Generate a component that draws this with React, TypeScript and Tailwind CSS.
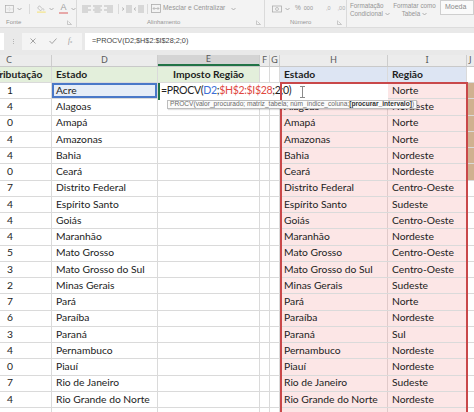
import React from "react";

const C_VALS = [1, 4, 0, 4, 4, 0, 7, 4, 4, 4, 5, 3, 2, 7, 6, 3, 4, 0, 7, 4, 3];
const STATES = [
  "Acre", "Alagoas", "Amapá", "Amazonas", "Bahia", "Ceará", "Distrito Federal",
  "Espírito Santo", "Goiás", "Maranhão", "Mato Grosso", "Mato Grosso do Sul",
  "Minas Gerais", "Pará", "Paraíba", "Paraná", "Pernambuco", "Piauí",
  "Rio de Janeiro", "Rio Grande do Norte", "",
];
const REGIONS = [
  "Norte", "Nordeste", "Norte", "Norte", "Nordeste", "Nordeste", "Centro-Oeste",
  "Sudeste", "Centro-Oeste", "Nordeste", "Centro-Oeste", "Centro-Oeste",
  "Sudeste", "Norte", "Nordeste", "Sul", "Nordeste", "Nordeste", "Sudeste",
  "Nordeste", "",
];

function Caret() {
  return (
    <svg width="5" height="4" viewBox="0 0 5 4" className="shrink-0">
      <path d="M0.5 1 L2.5 3 L4.5 1" fill="none" stroke="#a0a0a0" strokeWidth="0.8" />
    </svg>
  );
}

function Launcher() {
  return (
    <svg width="5" height="5" viewBox="0 0 5 5">
      <path d="M0.5 0.5 V4.5 H4.5 M1.5 1.5 L4.5 4.5" fill="none" stroke="#b5b5b5" strokeWidth="0.7" />
    </svg>
  );
}

function Ribbon() {
  return (
    <div className="flex h-[28px] bg-[#f3f3f3] border-b border-[#dcdcdc] text-[#959595] font-['Liberation_Sans',sans-serif]">
      {/* Fonte */}
      <div className="w-[77px] flex flex-col border-r border-[#dadada]">
        <div className="h-[17px] flex items-center pl-[5px] gap-[3px]">
          <svg width="11" height="10" viewBox="0 0 11 10">
            <rect x="0.5" y="0.5" width="10" height="9" fill="none" stroke="#a8a8a8" strokeWidth="0.8" />
            <path d="M5.5 0.5 V9.5 M0.5 5 H10.5" stroke="#c4c4c4" strokeWidth="0.7" strokeDasharray="1 1" />
          </svg>
          <Caret />
          <div className="w-[1px] h-[10px] bg-[#dadada] mx-[4px]" />
          <svg width="12" height="11" viewBox="0 0 12 11">
            <path d="M3 2 L7 6 L4.5 8.5 L0.8 4.8 Z" fill="none" stroke="#a8a8a8" strokeWidth="0.8" />
            <path d="M8 5.5 Q9 7 8.5 8" fill="none" stroke="#a8a8a8" strokeWidth="0.8" />
            <rect x="0" y="9.2" width="11" height="1.8" fill="#f4e79a" />
          </svg>
          <Caret />
          <div className="flex flex-col items-center ml-[2px]">
            <span className="text-[9px] leading-[9px] text-[#a0a0a0]">A</span>
            <div className="w-[9px] h-[1.6px] bg-[#e7a8a8]" />
          </div>
          <Caret />
        </div>
        <div className="flex-1 flex items-center justify-between pl-[6px] pr-[4px]">
          <span className="text-[6px] leading-none">Fonte</span>
          <Launcher />
        </div>
      </div>
      {/* Alinhamento */}
      <div className="w-[188px] flex flex-col border-r border-[#dadada]">
        <div className="h-[17px] flex items-center pl-[5px]">
          {[0, 1, 2].map((k) => (
            <svg key={k} width="9" height="8" viewBox="0 0 9 8" className="mr-[2px]">
              {k === 0 && <path d="M0 1 H9 M0 3 H6 M0 5 H9 M0 7 H6" stroke="#acacac" strokeWidth="0.8" />}
              {k === 1 && <path d="M0 1 H9 M1.5 3 H7.5 M0 5 H9 M1.5 7 H7.5" stroke="#acacac" strokeWidth="0.8" />}
              {k === 2 && <path d="M0 1 H9 M3 3 H9 M0 5 H9 M3 7 H9" stroke="#acacac" strokeWidth="0.8" />}
            </svg>
          ))}
          <div className="w-[1px] h-[10px] bg-[#dadada] mx-[3px]" />
          <svg width="10" height="8" viewBox="0 0 10 8" className="mr-[2px]">
            <path d="M4 1 H10 M4 3 H10 M4 5 H10 M4 7 H10 M0 2.5 L2 4 L0 5.5" fill="none" stroke="#acacac" strokeWidth="0.8" />
          </svg>
          <svg width="10" height="8" viewBox="0 0 10 8">
            <path d="M4 1 H10 M4 3 H10 M4 5 H10 M4 7 H10 M2 2.5 L0 4 L2 5.5" fill="none" stroke="#acacac" strokeWidth="0.8" />
          </svg>
          <div className="w-[1px] h-[10px] bg-[#dadada] mx-[3px]" />
          <svg width="10" height="9" viewBox="0 0 10 9" className="mr-[2px]">
            <rect x="0.5" y="0.5" width="9" height="8" fill="none" stroke="#acacac" strokeWidth="0.8" />
            <path d="M2 4.5 H8 M6.5 3 L8 4.5 L6.5 6 M3.5 3 L2 4.5 L3.5 6" fill="none" stroke="#acacac" strokeWidth="0.7" />
          </svg>
          <span className="text-[6.6px] leading-none whitespace-nowrap mr-[6px]">Mesclar e Centralizar</span>
          <Caret />
        </div>
        <div className="flex-1 flex items-center pr-[3px]">
          <span className="text-[6px] leading-none ml-[70px] flex-1">Alinhamento</span>
          <Launcher />
        </div>
      </div>
      {/* Número */}
      <div className="w-[82px] flex flex-col border-r border-[#dadada]">
        <div className="h-[17px] flex items-center pl-[7px] gap-[3px]">
          <svg width="10" height="8" viewBox="0 0 10 8">
            <rect x="0.5" y="1" width="9" height="6" fill="none" stroke="#acacac" strokeWidth="0.8" />
            <circle cx="5" cy="4" r="1.5" fill="none" stroke="#acacac" strokeWidth="0.7" />
          </svg>
          <Caret />
          <span className="text-[6.5px] leading-none ml-[2px]">%</span>
          <span className="text-[5.5px] leading-none">000</span>
          <span className="text-[5.5px] leading-none ml-[10px] text-[#acacac]">,0</span>
          <span className="text-[5.5px] leading-none ml-[4px] text-[#acacac]">,00</span>
        </div>
        <div className="flex-1 flex items-center pr-[4px]">
          <span className="text-[6px] leading-none ml-[25px] flex-1">Número</span>
          <Launcher />
        </div>
      </div>
      {/* Estilos */}
      <div className="flex-1 flex">
        <div className="flex flex-col pl-[3px] pt-[2px] text-[6.3px] leading-[8px] w-[42px]">
          <span className="whitespace-nowrap">Formatação</span>
          <span className="whitespace-nowrap flex items-center gap-[2px]">Condicional <Caret /></span>
        </div>
        <div className="flex flex-col items-center pt-[2px] text-[6.3px] leading-[8px] w-[51px]">
          <span className="whitespace-nowrap">Formatar como</span>
          <span className="whitespace-nowrap flex items-center gap-[2px]">Tabela <Caret /></span>
        </div>
        <div className="flex-1 h-[15px] border border-[#cfcfcf] bg-[#fafafa] flex items-center pl-[4px] text-[7px] text-[#8a8a8a]">
          Moeda
        </div>
      </div>
    </div>
  );
}

function FormulaBar() {
  return (
    <div className="flex items-center h-[27px] bg-[#e9e9e9] pb-[1px]">
      <div className="w-[4px] h-[17px] bg-white" />
      <div className="w-[18px] h-[17px] flex flex-col items-center justify-center gap-[1px]">
        <div className="w-[1px] h-[1px] bg-[#b5b5b5]" />
        <div className="w-[1px] h-[1px] bg-[#b5b5b5]" />
        <div className="w-[1px] h-[1px] bg-[#b5b5b5]" />
      </div>
      <div className="w-[60px] h-[17px] bg-[#f4f4f4] flex items-center text-[#9a9a9a]">
        <svg width="6" height="6" viewBox="0 0 6 6" className="ml-[8px]">
          <path d="M0.5 0.5 L5.5 5.5 M5.5 0.5 L0.5 5.5" stroke="#9a9a9a" strokeWidth="0.9" />
        </svg>
        <svg width="8" height="6" viewBox="0 0 8 6" className="ml-[13px]">
          <path d="M0.5 3 L3 5.5 L7.5 0.5" fill="none" stroke="#9a9a9a" strokeWidth="0.9" />
        </svg>
        <span className="ml-[11px] text-[7.5px] italic font-['Liberation_Serif',serif] text-[#9a9a9a]">
          f<span className="text-[5px]">x</span>
        </span>
      </div>
      <div className="ml-[3px] flex-1 h-[17px] bg-white flex items-center pl-[7px] text-[7.3px] text-[#444] font-['Liberation_Sans',sans-serif]">
        =PROCV(D2;$H$2:$I$28;2;0)
      </div>
    </div>
  );
}

const GRID = "border-[#dadada]";

function ColumnHeaders() {
  const head = "h-full flex items-center justify-center border-r border-[#cdcdcd] text-[9.5px] text-[#5a5a5a]";
  return (
    <div className="flex h-[12px] bg-[#ececec] border-b border-[#c9c9c9] font-['Noto_Sans','Liberation_Sans',sans-serif]">
      <div className={`${head} w-[52px] !justify-start pl-[6px]`}>C</div>
      <div className={`${head} w-[106px]`}>D</div>
      <div className={`${head} w-[102px] bg-[#d4d4d4] border-b-2 border-b-[#217346]`}>E</div>
      <div className={`${head} w-[10px]`}>F</div>
      <div className={`${head} w-[10px]`}>G</div>
      <div className={`${head} w-[108px]`}>H</div>
      <div className={`${head} w-[79px]`}>I</div>
      <div className="h-full flex items-center pl-[2px] text-[9.5px] text-[#5a5a5a]">J</div>
    </div>
  );
}

function HeaderRow() {
  const cell = `h-full flex items-center border-r ${GRID} font-bold text-[#1e1e1e] whitespace-nowrap overflow-hidden`;
  return (
    <div className={`flex h-[16px] border-b ${GRID}`}>
      <div className={`${cell} w-[52px] bg-[#e3efdb]`}>
        <span className="-ml-[6px]">Tributação</span>
      </div>
      <div className={`${cell} w-[106px] bg-[#e3efdb] pl-[4px]`}>Estado</div>
      <div className={`${cell} w-[102px] bg-[#e3efdb] justify-center`}>Imposto Região</div>
      <div className={`${cell} w-[10px]`} />
      <div className={`${cell} w-[10px]`} />
      <div className={`${cell} w-[108px] bg-[#dde5f3] pl-[4px]`}>Estado</div>
      <div className={`${cell} w-[79px] bg-[#dde5f3] pl-[4px]`}>Região</div>
      <div className="flex-1" />
    </div>
  );
}

function DataRow({ i }: { i: number }) {
  const cell = `h-full flex items-center border-r ${GRID} whitespace-nowrap overflow-hidden`;
  const pink = "h-full flex items-center border-r border-[#e0caca] whitespace-nowrap overflow-hidden bg-[#fce6e6] pl-[4px]";
  const tan = i < 6;
  const last = i === STATES.length - 1;
  return (
    <div className={`flex h-[16.25px] border-b ${GRID} text-[#222]`}>
      <div className={`${cell} w-[52px] pl-[7px]`}>{last ? "" : C_VALS[i]}</div>
      <div
        className={`${cell} w-[106px] pl-[4px] ${i === 0 ? "bg-[#e6edf7] shadow-[inset_0_0_0_2px_#4a78c8]" : ""}`}
      >
        {STATES[i]}
      </div>
      <div className={`${cell} w-[102px]`} />
      <div className={`${cell} w-[10px]`} />
      <div className={`${cell} w-[10px]`} />
      <div className={`${pink} w-[108px]`}>{i === 0 ? "" : STATES[i]}</div>
      <div className={`${pink} w-[79px]`}>{REGIONS[i]}</div>
      <div className={`h-full flex-1 ${tan ? "bg-[#d0b190]" : ""}`} />
    </div>
  );
}

export default function App() {
  return (
    <div className="relative w-[474px] h-[412px] overflow-hidden bg-white">
      <Ribbon />
      <FormulaBar />
      <ColumnHeaders />
      <div className="font-['Lato','Liberation_Sans',sans-serif] text-[10.3px]">
        <HeaderRow />
        {STATES.map((_, i) => (
          <DataRow key={i} i={i} />
        ))}
      </div>

      {/* in-cell editor */}
      <div className="absolute z-10 left-[158px] top-[83px] w-[230px] h-[16.5px] bg-white border-l-2 border-[#217346] flex items-center pl-[1px] font-['Lato','Liberation_Sans',sans-serif] text-[10.6px] tracking-[-0.35px] text-[#222] whitespace-nowrap">
        <span>=PROCV(</span>
        <span className="text-[#3d6fd6]">D2</span>
        <span>;</span>
        <span className="text-[#e0483f]">$H$2:$I$28</span>
        <span>;2;0)</span>
      </div>

      {/* referenced range */}
      <div className="absolute z-20 left-[280px] top-[82px] w-[188px] h-[340px] border-2 border-[#c9484a] pointer-events-none" />

      {/* I-beam cursor */}
      <svg className="absolute z-20 left-[299px] top-[86px]" width="7" height="12" viewBox="0 0 7 12">
        <path d="M1 0.5 H6 M3.5 0.5 V11.5 M1 11.5 H6" stroke="#8a8a8a" strokeWidth="1" fill="none" />
      </svg>

      {/* function tooltip */}
      <div className="absolute z-30 left-[167px] top-[100px] h-[9px] px-[2px] bg-[#fbfbfb] border border-[#bdbdbd] flex items-center text-[6.6px] leading-none text-[#6a6a6a] whitespace-nowrap font-['Liberation_Sans',sans-serif] shadow-[1px_1px_1px_rgba(0,0,0,0.12)]">
        PROCV(valor_procurado; matriz_tabela; núm_índice_coluna;{" "}
        <span className="font-bold text-[#333]">[procurar_intervalo]</span>)
      </div>
    </div>
  );
}
